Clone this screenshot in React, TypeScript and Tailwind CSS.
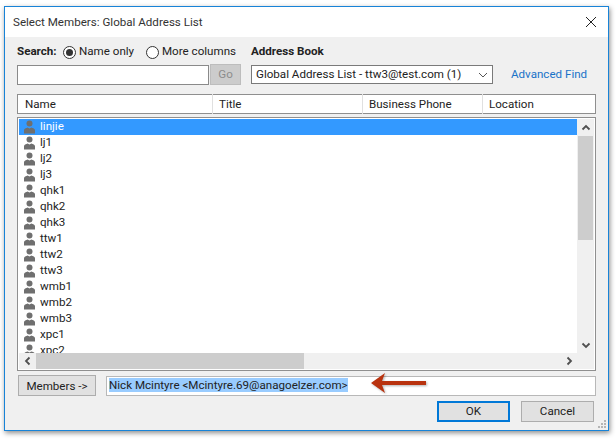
const members = ['linjie', 'lj1', 'lj2', 'lj3', 'qhk1', 'qhk2', 'qhk3', 'ttw1', 'ttw2', 'ttw3', 'wmb1', 'wmb2', 'wmb3', 'xpc1', 'xpc2'];

function PersonIcon() {
  return (
    <svg width="11" height="14" viewBox="0 0 11 14" className="shrink-0">
      <circle cx="5.5" cy="3.6" r="3" fill="#6f6f6f" />
      <path d="M0 13.5v-3.3C0 8.6 2 7.8 3.6 7.4L5.5 8.6l1.9-1.2C9 7.8 11 8.6 11 10.2v3.3z" fill="#6f6f6f" />
    </svg>
  );
}

function Chevron({ dir }: { dir: 'up' | 'down' | 'left' | 'right' }) {
  const d = {
    up: 'M1.5 6.5 5 3l3.5 3.5',
    down: 'M1.5 3.5 5 7l3.5-3.5',
    left: 'M6.5 1.5 3 5l3.5 3.5',
    right: 'M3.5 1.5 7 5 3.5 8.5',
  }[dir];
  return (
    <svg width="10" height="10" viewBox="0 0 10 10">
      <path d={d} fill="none" stroke="#505050" strokeWidth="1.8" />
    </svg>
  );
}

function Radio({ checked }: { checked?: boolean }) {
  return (
    <span className="w-[13px] h-[13px] rounded-full border border-[#333] bg-white flex items-center justify-center">
      {checked && <span className="w-[7px] h-[7px] rounded-full bg-[#333]" />}
    </span>
  );
}

export default function App() {
  return (
    <div className="w-[616px] h-[439px] bg-white pl-[4px] pt-[6px] text-[11.6px] text-[#222]" style={{ fontFamily: 'Roboto, sans-serif' }}>
      <div className="relative w-[605px] h-[425px] border border-[#1883d7] bg-[#f0f0f0] shadow-[1px_2px_5px_rgba(0,0,0,0.45)] flex flex-col">
        <div className="h-[30px] shrink-0 bg-white flex items-center justify-between pl-[8px] pr-[11px]">
          <span className="text-[#333] pt-[2px]">Select Members: Global Address List</span>
          <svg width="12" height="12" viewBox="0 0 12 12">
            <path d="M1 1l10 10M11 1 1 11" stroke="#222" strokeWidth="1" fill="none" />
          </svg>
        </div>

        <div className="flex flex-col pl-[12px] pt-[7px]">
          <div className="h-[16px] flex items-center">
            <span className="font-bold w-[46px]">Search:</span>
            <Radio checked />
            <span className="ml-[3px] w-[67px]">Name only</span>
            <Radio />
            <span className="ml-[3px] w-[89px]">More columns</span>
            <span className="font-bold">Address Book</span>
          </div>

          <div className="mt-[4px] h-[21px] flex items-center">
            <div className="w-[192px] h-[20px] bg-white border border-[#8a8a8a]" />
            <div className="ml-[1px] w-[31px] h-[21px] bg-[#cccccc] border border-[#bdbdbd] flex items-center justify-center text-[#8c8c8c]">Go</div>
            <div className="ml-[10px] w-[242px] h-[19px] bg-white border border-[#7a7a7a] flex items-center justify-between pl-[4px] pr-[4px]">
              <span>Global Address List - ttw3@test.com (1)</span>
              <svg width="10" height="6" viewBox="0 0 10 6">
                <path d="M1 1l4 4 4-4" fill="none" stroke="#555" strokeWidth="1" />
              </svg>
            </div>
            <span className="ml-[18px] text-[#1a73c8]">Advanced Find</span>
          </div>

          <div className="mt-[9px] w-[579px] h-[20px] bg-white border border-[#8f8f8f] flex items-center">
            <span className="w-[195px] pl-[7px] pt-[2px] border-r border-[#e0e0e0]">Name</span>
            <span className="w-[150px] pl-[6px] pt-[2px] border-r border-[#e0e0e0]">Title</span>
            <span className="w-[120px] pl-[6px] pt-[2px] border-r border-[#e0e0e0]">Business Phone</span>
            <span className="pl-[6px] pt-[2px]">Location</span>
          </div>

          <div className="mt-[3px] w-[579px] h-[254px] border border-[#8f8f8f] bg-white flex flex-col p-[1px]">
            <div className="h-[234px] flex">
              <div className="flex-1 overflow-hidden">
                {members.map((name, i) => (
                  <div key={name} className={`h-[16px] flex items-center pl-[5px] gap-[5px] ${i === 0 ? 'bg-[#3399ff] text-white' : ''}`}>
                    <PersonIcon />
                    <span className="pb-[1px]">{name}</span>
                  </div>
                ))}
              </div>
              <div className="w-[17px] bg-[#f0f0f0] flex flex-col">
                <div className="h-[17px] flex items-center justify-center"><Chevron dir="up" /></div>
                <div className="h-[104px] bg-[#cdcdcd] mx-px" />
                <div className="flex-1" />
                <div className="h-[17px] flex items-center justify-center"><Chevron dir="down" /></div>
              </div>
            </div>
            <div className="h-[16px] bg-[#f0f0f0] flex">
              <div className="w-[17px] flex items-center justify-center"><Chevron dir="left" /></div>
              <div className="w-[268px] bg-[#cdcdcd]" />
              <div className="flex-1" />
              <div className="w-[17px] mr-[17px] flex items-center justify-center"><Chevron dir="right" /></div>
            </div>
          </div>

          <div className="mt-[4px] h-[21px] flex items-center">
            <div className="ml-[1px] w-[78px] h-[21px] bg-[#e1e1e1] border border-[#adadad] flex items-center justify-center pt-[2px]">Members -&gt;</div>
            <div className="ml-[10px] w-[490px] h-[20px] bg-white border border-[#b8b8b8] flex items-center pl-[2px] pb-[2px]">
              <span className="bg-[#99ccff] leading-[14px]">Nick Mcintyre &lt;Mcintyre.69@anagoelzer.com&gt;</span>
            </div>
          </div>

          <div className="mt-[5px] flex justify-end pr-[14px] gap-[11px]">
            <div className="w-[73px] h-[21px] bg-[#e1e1e1] border-2 border-[#0078d7] flex items-center justify-center">OK</div>
            <div className="w-[73px] h-[21px] bg-[#e1e1e1] border border-[#adadad] flex items-center justify-center">Cancel</div>
          </div>
        </div>

        {/* red arrow drawn over the recipient field */}
        <svg className="absolute left-[365px] top-[364px] drop-shadow-[1px_1px_1px_rgba(0,0,0,0.3)]" width="60" height="24" viewBox="0 0 60 24">
          <path d="M1 12 15 2l-3 8h44v4H12l3 8z" fill="#b9330f" />
        </svg>

        {/* resize grip */}
        <svg className="absolute right-[1px] bottom-[1px]" width="9" height="9" viewBox="0 0 9 9">
          <path d="M6 0h2v2H6zM3 3h2v2H3zM6 3h2v2H6zM0 6h2v2H0zM3 6h2v2H3zM6 6h2v2H6z" fill="#b5b5b5" />
        </svg>
      </div>
    </div>
  );
}
